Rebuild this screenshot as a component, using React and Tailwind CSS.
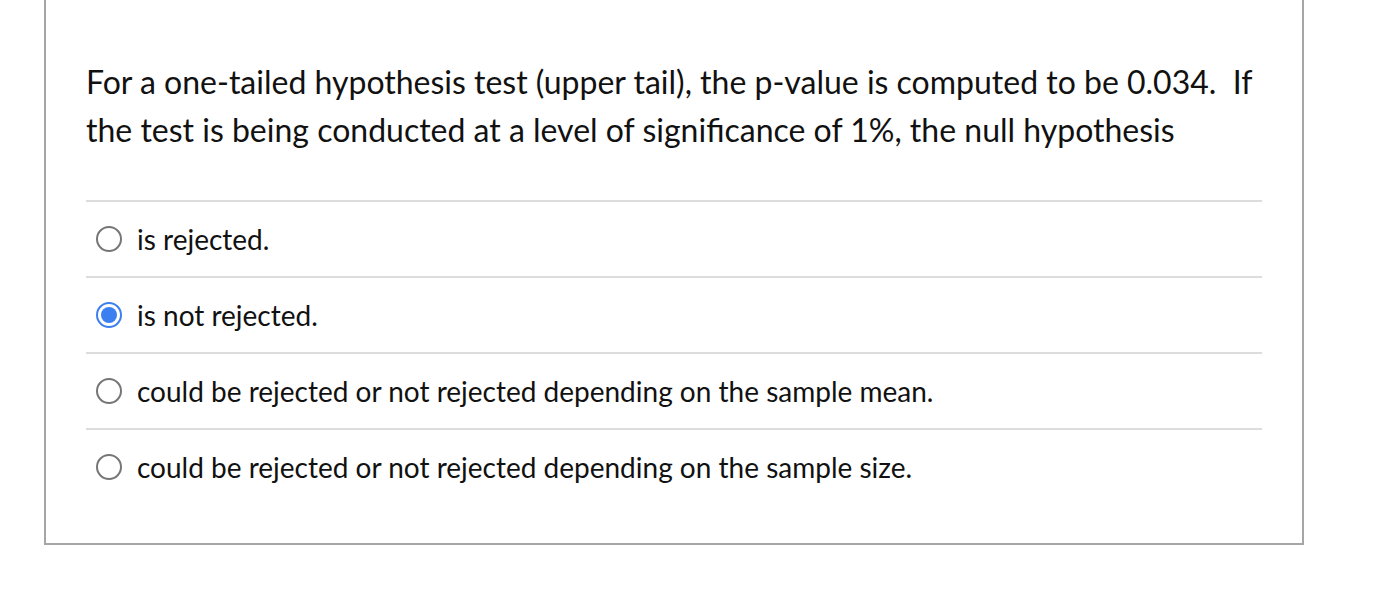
export default function App() {
  const options = [
    { label: "is rejected.", checked: false },
    { label: "is not rejected.", checked: true },
    { label: "could be rejected or not rejected depending on the sample mean.", checked: false },
    { label: "could be rejected or not rejected depending on the sample size.", checked: false },
  ];
  return (
    <div className="w-[1388px] h-[598px] bg-white" style={{ fontFamily: "Lato, 'Noto Sans', sans-serif" }}>
      <div className="ml-[44px] w-[1260px] border-x-2 border-b-2 border-[#a6a6a6] pt-[58px] pb-[39px] px-[40px] text-[#111]">
        <p className="text-[32px] leading-[48px]">
          For a one-tailed hypothesis test (upper tail), the p-value is computed to be 0.034.&nbsp; If the test is being conducted at a level of significance of 1%, the null hypothesis
        </p>
        <div className="mt-[46px]">
          {options.map((o, i) => (
            <div key={i} className="h-[76px] border-t-2 border-[#dcdcdc] flex items-center pl-[10px]">
              {o.checked ? (
                <span className="w-[26px] h-[26px] rounded-full border-2 border-[#3b7ff0] flex items-center justify-center shrink-0">
                  <span className="w-[16px] h-[16px] rounded-full bg-[#3b7ff0]" />
                </span>
              ) : (
                <span className="w-[26px] h-[26px] rounded-full border-2 border-[#767676] shrink-0" />
              )}
              <span className="ml-[15px] text-[28px]">{o.label}</span>
            </div>
          ))}
        </div>
      </div>
    </div>
  );
}
